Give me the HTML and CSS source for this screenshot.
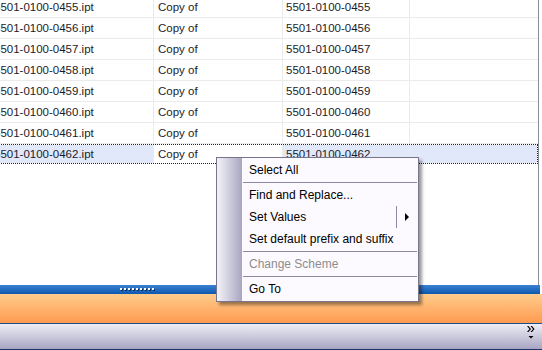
FILE: index.html
```html
<!DOCTYPE html>
<html>
<head>
    <title>Part Numbers</title>
    <link rel="stylesheet" href="styles.css">
</head>
<body>
    <div class="window">
        <div class="grid">
            <div class="rows">
                <div class="row">
                    <div class="cell c1">5501-0100-0455.ipt</div>
                    <div class="cell c2">Copy of</div>
                    <div class="cell c3">5501-0100-0455</div>
                    <div class="cell c4"></div>
                </div>
                <div class="row">
                    <div class="cell c1">5501-0100-0456.ipt</div>
                    <div class="cell c2">Copy of</div>
                    <div class="cell c3">5501-0100-0456</div>
                    <div class="cell c4"></div>
                </div>
                <div class="row">
                    <div class="cell c1">5501-0100-0457.ipt</div>
                    <div class="cell c2">Copy of</div>
                    <div class="cell c3">5501-0100-0457</div>
                    <div class="cell c4"></div>
                </div>
                <div class="row">
                    <div class="cell c1">5501-0100-0458.ipt</div>
                    <div class="cell c2">Copy of</div>
                    <div class="cell c3">5501-0100-0458</div>
                    <div class="cell c4"></div>
                </div>
                <div class="row">
                    <div class="cell c1">5501-0100-0459.ipt</div>
                    <div class="cell c2">Copy of</div>
                    <div class="cell c3">5501-0100-0459</div>
                    <div class="cell c4"></div>
                </div>
                <div class="row">
                    <div class="cell c1">5501-0100-0460.ipt</div>
                    <div class="cell c2">Copy of</div>
                    <div class="cell c3">5501-0100-0460</div>
                    <div class="cell c4"></div>
                </div>
                <div class="row">
                    <div class="cell c1">5501-0100-0461.ipt</div>
                    <div class="cell c2">Copy of</div>
                    <div class="cell c3">5501-0100-0461</div>
                    <div class="cell c4"></div>
                </div>
                <div class="row selected">
                    <div class="cell c1">5501-0100-0462.ipt</div>
                    <div class="cell c2">Copy of</div>
                    <div class="cell c3">5501-0100-0462</div>
                    <div class="cell c4"></div>
                </div>
            </div>
        </div>

        <div class="splitter">
            <span class="grip"></span><span class="grip"></span><span class="grip"></span>
            <span class="grip"></span><span class="grip"></span><span class="grip"></span>
            <span class="grip"></span><span class="grip"></span><span class="grip"></span>
        </div>

        <div class="band"></div>

        <div class="toolbar">
            <svg class="more" width="8" height="14" viewBox="0 0 8 14">
                <path d="M0 0h1.5l2.5 3-2.5 3h-1.5l2.5-3z M3.5 0h1.5l2.5 3-2.5 3h-1.5l2.5-3z" fill="#000"/>
                <path d="M1.5 10h5l-2.5 2.5z" fill="#000"/>
            </svg>
        </div>

        <div class="menu">
            <div class="gutter"></div>
            <div class="items">
                <div class="item">Select All</div>
                <div class="sep"></div>
                <div class="item">Find and Replace...</div>
                <div class="item sub">Set Values<span class="arrow"></span></div>
                <div class="item">Set default prefix and suffix</div>
                <div class="sep"></div>
                <div class="item disabled">Change Scheme</div>
                <div class="sep"></div>
                <div class="item">Go To</div>
            </div>
        </div>
    </div>
</body>
</html>
```
FILE: styles.css
```css
* {
    box-sizing: border-box;
}

body {
    margin: 0;
    background-color: #ffffff;
    font-family: "Liberation Sans", Arial, sans-serif;
}

.window {
    position: relative;
    width: 542px;
    height: 350px;
    display: flex;
    flex-direction: column;
    overflow: hidden;
}

/* data grid */

.grid {
    height: 285px;
    width: 539px;
    border-right: 1px solid #8c8c94;
    overflow: hidden;
}

.rows {
    margin-top: -3px;
    margin-left: -10px;
}

.row {
    display: flex;
    height: 21px;
    border-bottom: 1px solid #ebebeb;
}

.cell {
    height: 20px;
    line-height: 20px;
    padding-left: 4px;
    font-size: 11.5px;
    color: #1c1c28;
    white-space: nowrap;
    overflow: hidden;
    border-right: 1px solid #ebebeb;
}

.c1 {
    width: 164px;
}

.c2 {
    width: 129px;
}

.c3 {
    width: 127px;
    padding-left: 3px;
}

.c4 {
    flex: 1;
    border-right: none;
}

.row.selected {
    height: 20px;
    border: 1px dotted #222222;
    border-left: none;
}

.row.selected .cell {
    height: 18px;
    line-height: 18px;
    background-color: #e0e8fa;
}

.row.selected .c2 {
    background-color: #ffffff;
}

/* splitter and panels */

.splitter {
    height: 9px;
    display: flex;
    gap: 2px;
    padding: 3px 0 0 120px;
    background: linear-gradient(#3a82d2, #0d58b0);
    margin-right: 2px;
}

.grip {
    width: 2px;
    height: 2px;
    background-color: #ffffff;
    box-shadow: 1px 1px 0 #0a2c5c;
}

.band {
    height: 30px;
    background: linear-gradient(#ffcc8c, #ff9a50);
    border-bottom: 1px solid #1a4f8e;
}

.toolbar {
    flex: 1;
    display: flex;
    justify-content: flex-end;
    padding: 2px 7px 0 0;
    background: linear-gradient(#efeef6, #a7a5c3);
    border-bottom: 1px solid #1f3464;
}

/* context menu */

.menu {
    position: absolute;
    left: 216px;
    top: 157px;
    width: 203px;
    height: 145px;
    display: flex;
    background-color: #fcfaff;
    border: 1px solid #77758e;
    box-shadow: 3px 3px 3px rgba(0, 0, 0, 0.4);
    font-size: 12px;
    color: #000000;
}

.gutter {
    width: 25px;
    background: linear-gradient(to right, #f4f3f9, #a8a6c0);
}

.items {
    flex: 1;
    padding: 1px;
}

.item {
    position: relative;
    height: 22px;
    line-height: 22px;
    padding-left: 6px;
}

.item.disabled {
    color: #8d8d8d;
}

.sep {
    height: 3px;
    border-top: 1px solid transparent;
    border-bottom: 1px solid transparent;
    background-clip: padding-box;
    background-color: #8c8aa4;
}

.item.sub .arrow {
    position: absolute;
    left: 162px;
    top: 7px;
    width: 0;
    height: 0;
    border-top: 4px solid transparent;
    border-bottom: 4px solid transparent;
    border-left: 4px solid #000000;
}

.item.sub:after {
    content: "";
    position: absolute;
    left: 153px;
    top: 0;
    width: 1px;
    height: 22px;
    background-color: #8c8aa4;
}
```
